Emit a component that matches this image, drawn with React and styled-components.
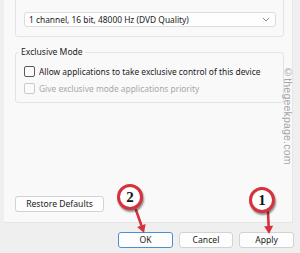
import React from "react";
import styled, { createGlobalStyle } from "styled-components";

const Global = createGlobalStyle`
  html, body { margin: 0; padding: 0; }
  body { background: #efefef; font-family: "Noto Sans", "Open Sans", sans-serif; }
`;

const Page = styled.div`
  position: relative;
  width: 300px;
  height: 253px;
  overflow: hidden;
  display: flex;
  flex-direction: column;
  background: #efefef;
`;

const Panel = styled.div`
  margin: 0 7px 0 4px;
  height: 223px;
  box-sizing: border-box;
  background: #f9f9f9;
  border-right: 1px solid #e6e6e6;
  border-bottom: 1px solid #e6e6e6;
  padding: 0 8px 10px 11px;
  display: flex;
  flex-direction: column;
`;

const TopGroup = styled.div`
  margin-top: -10px;
  border: 1px solid #e3e3e3;
  border-radius: 3px;
  padding: 21px 7px 9px 8px;
`;

const Select = styled.div`
  height: 15px;
  box-sizing: border-box;
  border: 1px solid #dcdcdc;
  border-radius: 3px;
  background: #fefefe;
  display: flex;
  align-items: center;
  justify-content: space-between;
  padding: 0 5px 0 4px;
  font-size: 8.4px;
  color: #1b1b1b;
`;

const Fieldset = styled.fieldset`
  margin: 8px 0 0 0;
  border: 1px solid #e3e3e3;
  border-radius: 3px;
  padding: 4px 8px 5px 8px;
  min-width: 0;
`;

const Legend = styled.legend`
  padding: 0 2px;
  margin-left: -5px;
  font-size: 8.6px;
  line-height: 14px;
  color: #1b1b1b;
`;

const CheckRow = styled.label`
  display: flex;
  align-items: center;
  gap: 4px;
  height: 17px;
  font-size: 8.4px;
  color: ${(p) => (p.$disabled ? "#a8a8a8" : "#1b1b1b")};
  white-space: nowrap;
`;

const Box = styled.span`
  width: 9px;
  height: 9px;
  border: 1px solid ${(p) => (p.$disabled ? "#cbcbcb" : "#5a5a5a")};
  border-radius: 2px;
  background: #fbfbfb;
  flex: none;
`;

const Spacer = styled.div`
  flex: 1;
`;

const Button = styled.button`
  font-family: inherit;
  font-size: 8.6px;
  color: #1b1b1b;
  height: 16px;
  width: ${(p) => p.$w}px;
  box-sizing: border-box;
  padding: 0;
  background: #fdfdfd;
  border: 1px solid ${(p) => (p.$primary ? "#4a8fd6" : "#d3d3d3")};
  border-radius: 3px;
  display: flex;
  align-items: center;
  justify-content: center;
  line-height: 1;
`;

const RestoreRow = styled.div`
  display: flex;
`;

const Footer = styled.div`
  flex: 1;
  display: flex;
  justify-content: flex-end;
  align-items: flex-start;
  gap: 6px;
  padding: 9px 6px 0 0;
`;

const Watermark = styled.div`
  position: absolute;
  left: 282px;
  top: 66px;
  writing-mode: vertical-rl;
  font-family: "Liberation Sans", Arial, sans-serif;
  font-size: 10.5px;
  color: #a6a6a6;
  letter-spacing: 0.2px;
`;

const Badge = styled.div`
  position: absolute;
  left: ${(p) => p.$x - 13}px;
  top: ${(p) => p.$y - 13}px;
  width: 26px;
  height: 26px;
  box-sizing: border-box;
  border-radius: 50%;
  border: 3px solid #d6323d;
  background: #ffffff;
  box-shadow: 1px 2px 2px rgba(0, 0, 0, 0.45);
  display: flex;
  align-items: center;
  justify-content: center;
  font-family: "Liberation Serif", "Times New Roman", serif;
  font-weight: bold;
  font-size: 15px;
  color: #111;
`;

const Overlay = styled.svg`
  position: absolute;
  left: 0;
  top: 0;
  pointer-events: none;
`;

function Arrow({ x1, y1, x2, y2 }) {
  const dx = x2 - x1;
  const dy = y2 - y1;
  const len = Math.hypot(dx, dy);
  const ux = dx / len;
  const uy = dy / len;
  const hl = 8;
  const hw = 4.5;
  const bx = x2 - ux * hl;
  const by = y2 - uy * hl;
  const px = -uy;
  const py = ux;
  return (
    <g>
      <line x1={x1} y1={y1} x2={bx} y2={by} stroke="#d6323d" strokeWidth="2.6" strokeLinecap="round" />
      <polygon
        points={`${x2},${y2} ${bx + px * hw},${by + py * hw} ${bx - px * hw},${by - py * hw}`}
        fill="#d6323d"
      />
    </g>
  );
}

function Chevron() {
  return (
    <svg width="8" height="5" viewBox="0 0 8 5">
      <path d="M0.8 0.8 L4 4 L7.2 0.8" fill="none" stroke="#8a8a8a" strokeWidth="1" />
    </svg>
  );
}

export default function App() {
  return (
    <>
      <Global />
      <Page>
        <Panel>
          <TopGroup>
            <Select>
              <span>1 channel, 16 bit, 48000 Hz (DVD Quality)</span>
              <Chevron />
            </Select>
          </TopGroup>
          <Fieldset>
            <Legend>Exclusive Mode</Legend>
            <CheckRow>
              <Box />
              Allow applications to take exclusive control of this device
            </CheckRow>
            <CheckRow $disabled>
              <Box $disabled />
              Give exclusive mode applications priority
            </CheckRow>
          </Fieldset>
          <Spacer />
          <RestoreRow>
            <Button $w={89}>Restore Defaults</Button>
          </RestoreRow>
        </Panel>
        <Footer>
          <Button $w={55} $primary>OK</Button>
          <Button $w={54}>Cancel</Button>
          <Button $w={55}>Apply</Button>
        </Footer>
        <Watermark>©thegeekpage.com</Watermark>
        <Overlay width="300" height="253">
          <Arrow x1={136} y1={210} x2={144} y2={233} />
          <Arrow x1={268} y1={212} x2={269} y2={234} />
        </Overlay>
        <Badge $x={130} $y={197}>2</Badge>
        <Badge $x={262} $y={200}>1</Badge>
      </Page>
    </>
  );
}
